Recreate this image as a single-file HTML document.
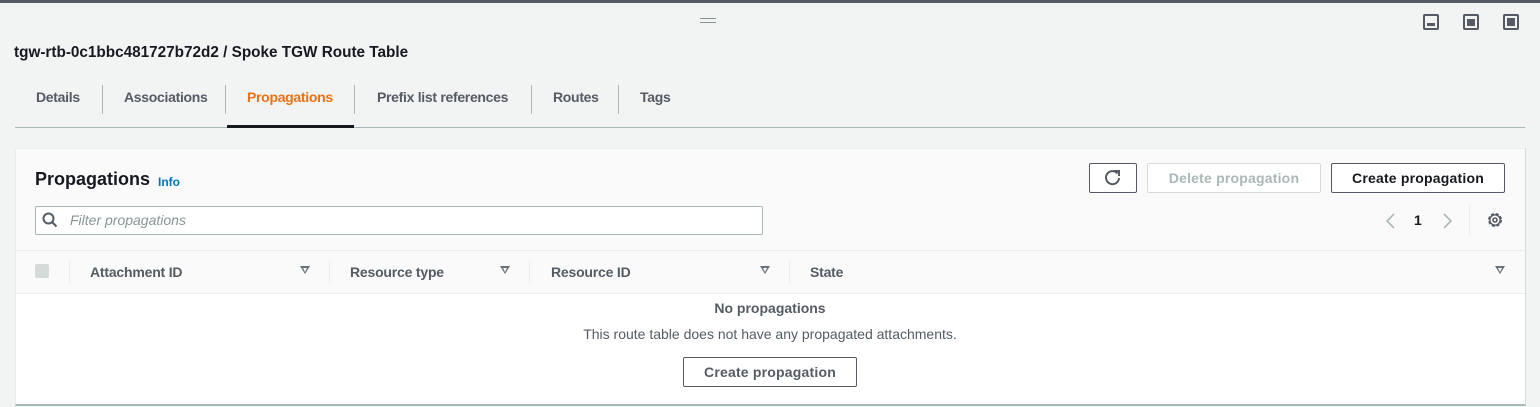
<!DOCTYPE html>
<html><head><style>
*{margin:0;padding:0;box-sizing:border-box}
body{width:1540px;height:407px;background:#f2f3f3;font-family:"Liberation Sans",sans-serif;position:relative;overflow:hidden;color:#16191f}
.a{position:absolute;white-space:nowrap}
.b{font-weight:bold}
.tab{position:absolute;top:89px;font-size:14px;font-weight:bold;color:#545b64;letter-spacing:-0.3px}
.sep{position:absolute;width:1px;background:#aab7b8}
.btn{position:absolute;border:1px solid #545b64;border-radius:2px;background:#fff;font-size:14px;font-weight:bold;color:#545b64;text-align:center;line-height:28px;letter-spacing:.2px}
.th{position:absolute;top:264px;font-size:14px;font-weight:bold;color:#545b64;letter-spacing:-0.2px}
.tri{position:absolute;top:266px;width:0;height:0;border-left:5px solid transparent;border-right:5px solid transparent;border-top:8px solid #687078}
.tri:after{content:"";position:absolute;left:-2.5px;top:-6.5px;border-left:2.5px solid transparent;border-right:2.5px solid transparent;border-top:4px solid #fafafa}
.csep{position:absolute;top:261px;height:22px;width:1px;background:#eaeded}
</style></head><body>
<div class="a" style="left:0;top:0;width:1540px;height:3px;background:#545b64"></div>
<div class="a" style="left:700px;top:18px;width:16px;height:1px;background:#879596"></div>
<div class="a" style="left:700px;top:22px;width:16px;height:1px;background:#879596"></div>
<svg class="a" style="left:1423px;top:14px" width="100" height="18">
<g fill="none" stroke="#545b64" stroke-width="2"><rect x="1" y="1" width="14" height="14" rx="1"/><rect x="41" y="1" width="14" height="14" rx="1"/><rect x="81" y="1" width="14" height="14" rx="1"/></g>
<g fill="#545b64"><rect x="4" y="9" width="8" height="3"/><rect x="44" y="5" width="8" height="7"/><rect x="84" y="4" width="8" height="8"/></g></svg>
<div class="a b" style="left:14px;top:44px;font-size:15.3px">tgw-rtb-0c1bbc481727b72d2 / Spoke TGW Route Table</div>
<div class="tab" style="left:36px">Details</div>
<div class="sep" style="left:102px;top:85px;height:29px"></div>
<div class="tab" style="left:124px">Associations</div>
<div class="sep" style="left:225px;top:85px;height:29px"></div>
<div class="tab" style="left:247px;color:#ec7211">Propagations</div>
<div class="sep" style="left:354px;top:85px;height:29px"></div>
<div class="tab" style="left:377px">Prefix list references</div>
<div class="sep" style="left:531px;top:85px;height:29px"></div>
<div class="tab" style="left:553px">Routes</div>
<div class="sep" style="left:618px;top:85px;height:29px"></div>
<div class="tab" style="left:640px">Tags</div>
<div class="a" style="left:15px;top:127px;width:1510px;height:1px;background:#aab7b8"></div>
<div class="a" style="left:227px;top:125px;width:127px;height:3px;background:#16191f"></div>

<div class="a" style="left:15px;top:148px;width:1511px;height:258px;background:#fafafa;border:1px solid #eaeded;border-right:1px solid #d5dbdb;border-bottom:2px solid #aab7b8"></div>
<div class="a b" style="left:35px;top:169px;font-size:18px">Propagations</div>
<div class="a b" style="left:158px;top:175px;font-size:12px;color:#0073bb">Info</div>
<div class="btn" style="left:1089px;top:163px;width:48px;height:30px"></div>
<svg class="a" style="left:1103px;top:169px" width="20" height="18" viewBox="0 0 20 18"><path d="M14.5 4.5A6.5 6.5 0 1 0 16 9" fill="none" stroke="#545b64" stroke-width="2"/><path d="M11 2h5v5" fill="none" stroke="#545b64" stroke-width="2"/></svg>
<div class="btn" style="left:1147px;top:163px;width:174px;height:30px;border-color:#d5dbdb;color:#aab7b8">Delete propagation</div>
<div class="btn" style="left:1331px;top:163px;width:174px;height:30px;color:#16191f">Create propagation</div>
<div class="a" style="left:35px;top:206px;width:728px;height:29px;background:#fff;border:1px solid #aab7b8;border-radius:2px"></div>
<svg class="a" style="left:42px;top:212px" width="16" height="16"><circle cx="6.5" cy="6.5" r="5" fill="none" stroke="#545b64" stroke-width="2"/><path d="M10 10l4.5 4.5" stroke="#545b64" stroke-width="2"/></svg>
<div class="a" style="left:70px;top:212px;font-size:14px;font-style:italic;color:#879596">Filter propagations</div>
<svg class="a" style="left:1382px;top:211px" width="120" height="20"><path d="M12 3l-7 7 7 7" fill="none" stroke="#aab7b8" stroke-width="1.6"/><path d="M62 3l7 7-7 7" fill="none" stroke="#aab7b8" stroke-width="1.6"/>
<g transform="translate(113,9)"><circle r="6" fill="none" stroke="#545b64" stroke-width="2" stroke-dasharray="3 1.8"/><circle r="5.2" fill="none" stroke="#545b64" stroke-width="1.4"/><circle r="2" fill="none" stroke="#545b64" stroke-width="1.6"/></g></svg>
<div class="a b" style="left:1414px;top:212px;font-size:14px">1</div>
<div class="a" style="left:1469px;top:205px;width:1px;height:30px;background:#eaeded"></div>

<div class="a" style="left:16px;top:250px;width:1509px;height:1px;background:#eaeded"></div>
<div class="a" style="left:35px;top:264px;width:14px;height:14px;background:#d5dbdb;border-radius:2px"></div>
<div class="csep" style="left:69px"></div>
<div class="th" style="left:90px">Attachment ID</div><div class="tri" style="left:300px"></div>
<div class="csep" style="left:329px"></div>
<div class="th" style="left:350px">Resource type</div><div class="tri" style="left:500px"></div>
<div class="csep" style="left:529px"></div>
<div class="th" style="left:551px">Resource ID</div><div class="tri" style="left:760px"></div>
<div class="csep" style="left:789px"></div>
<div class="th" style="left:810px">State</div><div class="tri" style="left:1495px"></div>
<div class="a" style="left:16px;top:293px;width:1509px;height:111px;background:#fff;border-top:1px solid #eaeded"></div>
<div class="a b" style="left:0;width:1540px;text-align:center;top:300px;font-size:14px;color:#545b64">No propagations</div>
<div class="a" style="left:0;width:1540px;text-align:center;top:326px;font-size:14px;color:#545b64">This route table does not have any propagated attachments.</div>
<div class="btn" style="left:683px;top:357px;width:174px;height:30px">Create propagation</div>
</body></html>
